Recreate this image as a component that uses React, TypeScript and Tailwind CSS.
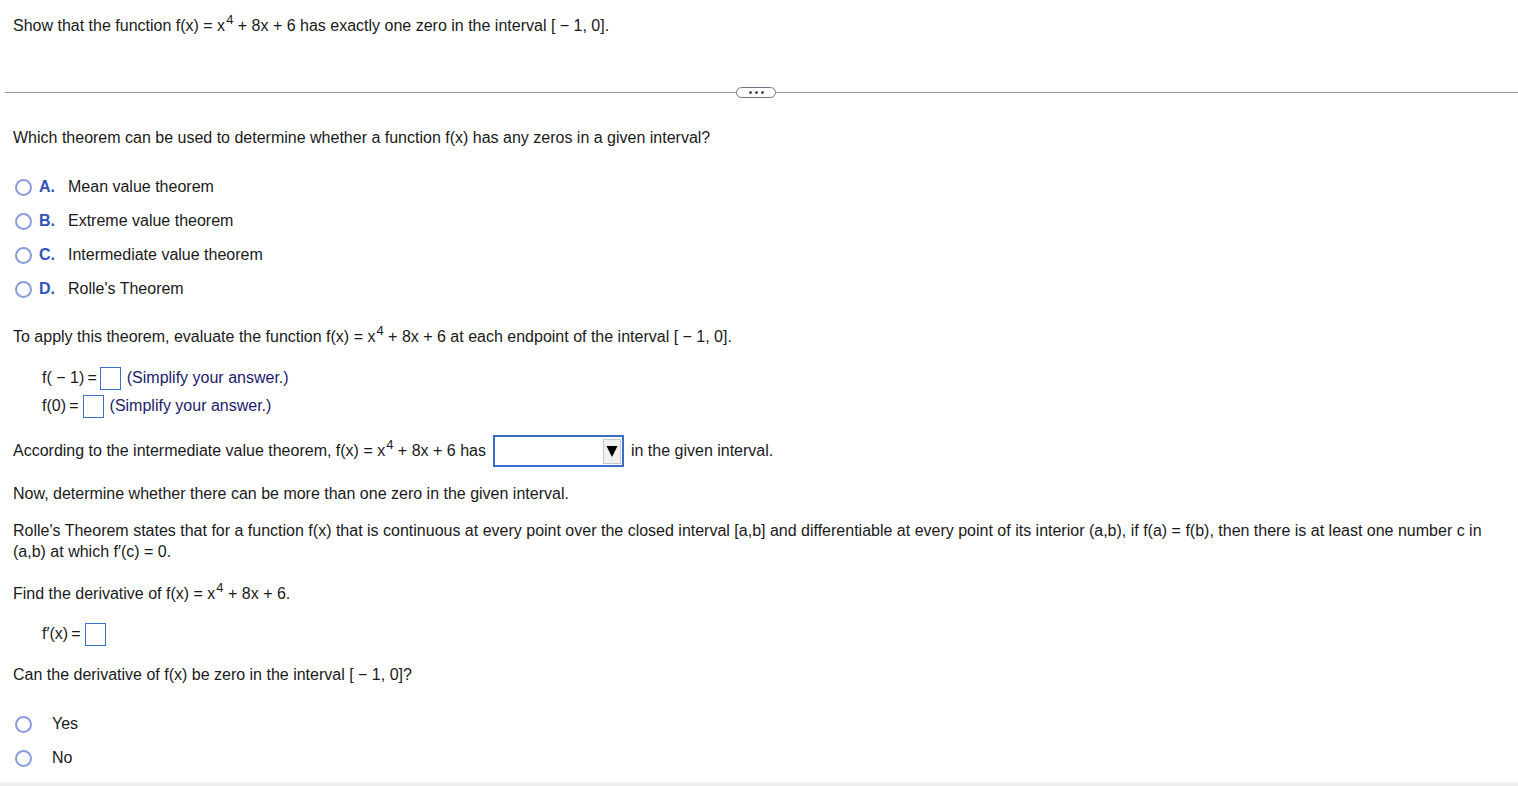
import React from "react";

const fx = (
  <>
    f(x) = x<span className="relative -top-[7px] text-[13px] leading-none ml-[1px]">4</span>&nbsp;+ 8x + 6
  </>
);

function Radio() {
  return <span className="inline-block w-[17px] h-[17px] rounded-full border-2 border-[#8a9be0] bg-white shrink-0" />;
}

function AnswerBox({ className = "" }: { className?: string }) {
  return <span className={`inline-block w-[21px] h-[23px] border border-[#3f6fd1] bg-white ${className}`} />;
}

const options = [
  { letter: "A.", text: "Mean value theorem" },
  { letter: "B.", text: "Extreme value theorem" },
  { letter: "C.", text: "Intermediate value theorem" },
  { letter: "D.", text: "Rolle's Theorem" },
];

export default function App() {
  return (
    <div className="min-h-screen bg-white text-[16px] leading-[18px] text-[#1a1a1a]" style={{ fontFamily: '"Liberation Sans", Arial, sans-serif' }}>
      <div className="pl-[13px] pt-[17px]">
        Show that the function {fx} has exactly one zero in the interval [ − 1, 0].
      </div>

      {/* divider with expander pill */}
      <div className="mt-[51px] ml-[5px] h-[12px] flex items-center">
        <div className="w-[731px] h-px bg-[#8f97a8]" />
        <div className="w-[40px] h-[11px] rounded-full border border-[#6f7788] flex items-center justify-center gap-[3px]">
          <span className="w-[3px] h-[3px] rounded-full bg-[#4a5060]" />
          <span className="w-[3px] h-[3px] rounded-full bg-[#4a5060]" />
          <span className="w-[3px] h-[3px] rounded-full bg-[#4a5060]" />
        </div>
        <div className="flex-1 h-px bg-[#8f97a8]" />
      </div>

      <div className="pl-[13px] mt-[31px]">
        Which theorem can be used to determine whether a function f(x) has any zeros in a given interval?
      </div>

      <div className="mt-[23px] pl-[15px]">
        {options.map((o) => (
          <div key={o.letter} className="h-[34px] flex items-center">
            <Radio />
            <span className="ml-[7px] w-[29px] font-bold text-[#3352b8]">{o.letter}</span>
            <span>{o.text}</span>
          </div>
        ))}
      </div>

      <div className="pl-[13px] mt-[22px]">
        To apply this theorem, evaluate the function {fx} at each endpoint of the interval [ − 1, 0].
      </div>

      <div className="pl-[42px] mt-[20px] h-[24px] flex items-center text-[#1b1b6b]">
        <span className="text-[#1a1a1a]">f( − 1)&thinsp;=</span>
        <AnswerBox className="ml-[3px]" />
        <span className="ml-[6px]">(Simplify your answer.)</span>
      </div>
      <div className="pl-[42px] mt-[4px] h-[24px] flex items-center text-[#1b1b6b]">
        <span className="text-[#1a1a1a]">f(0)&thinsp;=</span>
        <AnswerBox className="ml-[4px]" />
        <span className="ml-[6px]">(Simplify your answer.)</span>
      </div>

      <div className="pl-[13px] mt-[17px] h-[32px] flex items-center">
        <span>According to the intermediate value theorem, {fx} has</span>
        <div className="ml-[7px] w-[131px] h-[32px] border-2 border-[#3a6bc9] bg-white flex items-center justify-end pr-[1px]">
          <div className="w-[18px] h-[25px] bg-[#f0f0f0] border border-[#c8c8c8] flex items-center justify-center">
            <svg width="12" height="13" viewBox="0 0 12 13">
              <path d="M0.5 1 L11.5 1 L6 12 Z" fill="#000" />
            </svg>
          </div>
        </div>
        <span className="ml-[7px]">in the given interval.</span>
      </div>

      <div className="pl-[13px] mt-[18px]">Now, determine whether there can be more than one zero in the given interval.</div>

      <div className="pl-[13px] pr-[14px] mt-[17px] leading-[21px]">
        Rolle's Theorem states that for a function f(x) that is continuous at every point over the closed interval [a,b] and differentiable at every
        point of its interior (a,b), if f(a) = f(b), then there is at least one number c in (a,b) at which f&prime;(c) = 0.
      </div>

      <div className="pl-[13px] mt-[23px]">Find the derivative of {fx}.</div>

      <div className="pl-[42px] mt-[19px] h-[24px] flex items-center">
        <span>f&prime;(x)&thinsp;=</span>
        <AnswerBox className="ml-[4px]" />
      </div>

      <div className="pl-[13px] mt-[20px]">Can the derivative of f(x) be zero in the interval [ − 1, 0]?</div>

      <div className="mt-[23px] pl-[15px]">
        {["Yes", "No"].map((t) => (
          <div key={t} className="h-[34px] flex items-center">
            <Radio />
            <span className="ml-[20px]">{t}</span>
          </div>
        ))}
      </div>

      <div className="mt-[7px] h-[20px] bg-[#efefef]" />
    </div>
  );
}
